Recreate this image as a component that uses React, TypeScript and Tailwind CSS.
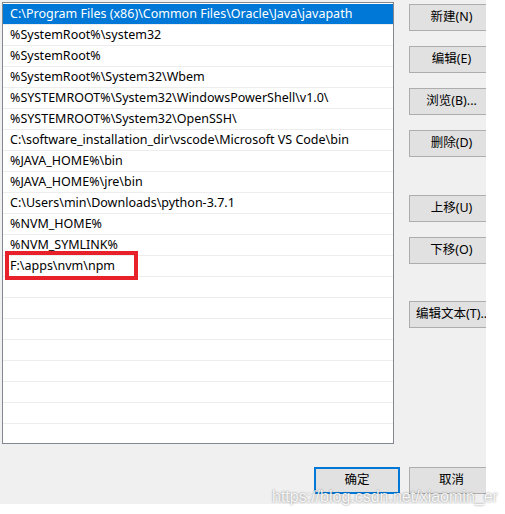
import React from "react";

const paths = [
  "C:\\Program Files (x86)\\Common Files\\Oracle\\Java\\javapath",
  "%SystemRoot%\\system32",
  "%SystemRoot%",
  "%SystemRoot%\\System32\\Wbem",
  "%SYSTEMROOT%\\System32\\WindowsPowerShell\\v1.0\\",
  "%SYSTEMROOT%\\System32\\OpenSSH\\",
  "C:\\software_installation_dir\\vscode\\Microsoft VS Code\\bin",
  "%JAVA_HOME%\\bin",
  "%JAVA_HOME%\\jre\\bin",
  "C:\\Users\\min\\Downloads\\python-3.7.1",
  "%NVM_HOME%",
  "%NVM_SYMLINK%",
  "F:\\apps\\nvm\\npm",
];

const font = "font-['Segoe_UI','Noto_Sans','Noto_Sans_CJK_SC',sans-serif]";

function SideButton({ label, className = "" }: { label: string; className?: string }) {
  return (
    <button
      type="button"
      className={`h-[27px] w-[85px] shrink-0 border border-[#adadad] bg-[#e1e1e1] text-center text-[12.5px] text-black ${className}`}
    >
      {label}
    </button>
  );
}

export default function App() {
  const rows = [...paths, ...Array(8).fill("")];

  return (
    <div className={`relative h-[514px] w-[505px] bg-white ${font}`}>
      <div className="flex h-[504px] w-[486px] flex-col overflow-hidden bg-[#f0f0f0]">
        <div className="flex">
          {/* path list */}
          <div className="ml-[2px] mt-[2px] h-[442px] w-[392px] shrink-0 overflow-hidden border border-[#828790] bg-white pt-[1px]">
            {rows.map((p, i) => (
              <div
                key={i}
                className={`flex h-[21px] items-center whitespace-nowrap border-b border-[#ededed] pl-[7px] text-[12.5px] ${
                  i === 0 ? "bg-[#0078d7] text-white" : "text-black"
                }`}
              >
                {i === 12 ? (
                  <span className="relative">
                    {p}
                    <span className="absolute -left-[5px] -top-[6px] h-[29px] w-[133px] border-[4px] border-[#e8202a]" />
                  </span>
                ) : (
                  p
                )}
              </div>
            ))}
          </div>

          <div className="ml-[15px] flex shrink-0 flex-col pt-[4px]">
            <SideButton label="新建(N)" />
            <SideButton label="编辑(E)" className="mt-[15px]" />
            <SideButton label="浏览(B)..." className="mt-[15px]" />
            <SideButton label="删除(D)" className="mt-[15px]" />
            <SideButton label="上移(U)" className="mt-[38px]" />
            <SideButton label="下移(O)" className="mt-[15px]" />
            <SideButton label="编辑文本(T)..." className="mt-[37px] whitespace-nowrap !text-left pl-[6px]" />
          </div>
        </div>

        <div className="mt-[23px] flex">
          <button
            type="button"
            className="ml-[314px] h-[27px] w-[86px] shrink-0 border-2 border-[#0078d7] bg-[#e1e1e1] text-[12.5px] text-black"
          >
            确定
          </button>
          <SideButton label="取消" className="ml-[9px]" />
        </div>
      </div>

      {/* blog watermark */}
      <div className="pointer-events-none absolute left-[272px] top-[485px] whitespace-nowrap font-['Liberation_Sans',sans-serif] text-[16px] text-white/90 [text-shadow:0_0_2px_rgba(0,0,0,0.5)]">
        https://blog.csdn.net/xiaomin_er
      </div>
    </div>
  );
}
